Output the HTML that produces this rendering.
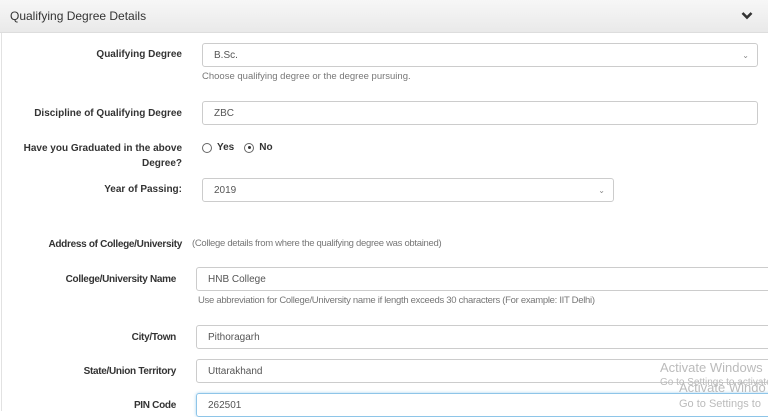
<!DOCTYPE html>
<html><head><style>
body{margin:0;width:768px;height:411px;overflow:hidden;background:#fff;font-family:"Liberation Sans",Arial,sans-serif;position:relative}
.hd{position:absolute;left:0;top:0;width:768px;height:32px;background:linear-gradient(#f7f7f7,#e9e9e9);border-bottom:1px solid #ddd}
.hd span{position:absolute;left:10px;top:9px;font-size:12px;color:#333}
.lb{position:absolute;font-size:10px;font-weight:bold;color:#333;text-align:right;white-space:nowrap}
.bx{position:absolute;border:1px solid #ccc;border-radius:3px;box-sizing:border-box;font-size:10px;color:#555;padding-left:11px;display:flex;align-items:center}
.hp{position:absolute;font-size:9.5px;color:#777;white-space:nowrap}
.ch{position:absolute;right:8px;top:7px;font-size:8px;color:#888}
.w{position:absolute;color:#bbb;font-size:13px;white-space:nowrap}
.w2{position:absolute;color:#bbb;font-size:10px;white-space:nowrap}
.n{letter-spacing:-0.3px}
</style></head><body>
<div style="position:absolute;left:1px;top:32px;width:1px;height:379px;background:#e2e2e2"></div>
<div class="hd"><span>Qualifying Degree Details</span>
<svg style="position:absolute;left:741px;top:11px" width="12" height="9" viewBox="0 0 12 9"><path d="M1.5 2 L6 6.5 L10.5 2" stroke="#333" stroke-width="2.6" fill="none"/></svg></div>

<div class="lb" style="right:586px;top:49px">Qualifying Degree</div>
<div class="bx" style="left:202px;top:43px;width:556px;height:24px">B.Sc.<span class="ch">&#8964;</span></div>
<div class="hp" style="left:202px;top:71px">Choose qualifying degree or the degree pursuing.</div>

<div class="lb" style="right:586px;top:108px">Discipline of Qualifying Degree</div>
<div class="bx" style="left:202px;top:101px;width:556px;height:24px">ZBC</div>

<div class="lb" style="right:586px;top:141px;line-height:15px">Have you Graduated in the above<br>Degree?</div>
<div style="position:absolute;left:202px;top:142px;font-size:10px;font-weight:bold;color:#333;display:flex;align-items:center">
<span style="display:inline-block;width:8px;height:8px;border:1px solid #666;border-radius:50%;margin-right:5px"></span>Yes
<span style="display:inline-block;width:8px;height:8px;border:1px solid #666;border-radius:50%;margin:0 5px 0 10px;position:relative"><span style="position:absolute;left:2.5px;top:2.5px;width:3px;height:3px;background:#333;border-radius:50%"></span></span>No</div>

<div class="lb" style="right:586px;top:184px">Year of Passing:</div>
<div class="bx" style="left:202px;top:178px;width:412px;height:24px">2019<span class="ch">&#8964;</span></div>

<div class="lb n" style="right:586px;top:239px">Address of College/University</div>
<div class="hp n" style="left:192px;top:238px">(College details from where the qualifying degree was obtained)</div>

<div class="lb n" style="right:592px;top:274px">College/University Name</div>
<div class="bx" style="left:196px;top:267px;width:580px;height:24px">HNB College</div>
<div class="hp n" style="left:198px;top:295px">Use abbreviation for College/University name if length exceeds 30 characters (For example: IIT Delhi)</div>

<div class="lb n" style="right:592px;top:332px">City/Town</div>
<div class="bx" style="left:196px;top:325px;width:580px;height:24px">Pithoragarh</div>

<div class="lb n" style="right:592px;top:366px">State/Union Territory</div>
<div class="bx" style="left:196px;top:359px;width:580px;height:24px">Uttarakhand</div>

<div class="lb n" style="right:592px;top:400px">PIN Code</div>
<div class="bx" style="left:196px;top:393px;width:580px;height:24px;border-color:#8ec5e8;box-shadow:0 0 3px #a9d4f0;align-items:flex-start;padding-top:6px">262501</div>

<div class="w" style="left:660px;top:360px">Activate Windows</div>
<div class="w2" style="left:660px;top:377px">Go to Settings to activate</div>
<div class="w" style="left:679px;top:380px">Activate Windo</div>
<div class="w2" style="left:679px;top:398px;font-size:11px">Go to Settings to</div>
</body></html>
